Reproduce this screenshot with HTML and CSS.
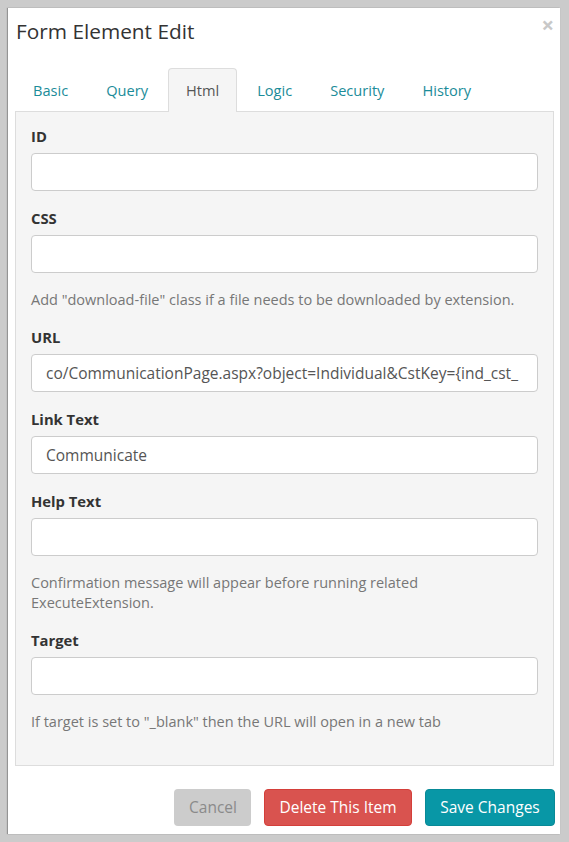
FILE: index.html
```html
<!DOCTYPE html>
<html>
<head>
<meta charset="utf-8">
<link rel="stylesheet" href="styles.css">
</head>
<body>
<div class="modal">
  <div class="modal-header">
    <h4 class="modal-title">Form Element Edit</h4>
    <span class="close">&times;</span>
  </div>
  <div class="modal-body">
    <ul class="tabs">
      <li class="tab">Basic</li>
      <li class="tab">Query</li>
      <li class="tab active">Html</li>
      <li class="tab">Logic</li>
      <li class="tab">Security</li>
      <li class="tab">History</li>
    </ul>
    <div class="panel">
      <div class="group">
        <label class="lbl">ID</label>
        <input class="field" type="text" value="">
      </div>
      <div class="group">
        <label class="lbl">CSS</label>
        <input class="field" type="text" value="">
        <p class="help">Add "download-file" class if a file needs to be downloaded by extension.</p>
      </div>
      <div class="group">
        <label class="lbl">URL</label>
        <div class="field">co/CommunicationPage.aspx?object=Individual&amp;CstKey={ind_cst_</div>
      </div>
      <div class="group">
        <label class="lbl">Link Text</label>
        <div class="field">Communicate</div>
      </div>
      <div class="group">
        <label class="lbl">Help Text</label>
        <input class="field" type="text" value="">
        <p class="help">Confirmation message will appear before running related<br>ExecuteExtension.</p>
      </div>
      <div class="group">
        <label class="lbl">Target</label>
        <input class="field" type="text" value="">
        <p class="help">If target is set to "_blank" then the URL will open in a new tab</p>
      </div>
    </div>
  </div>
  <div class="modal-footer">
    <button class="btn btn-cancel">Cancel</button>
    <button class="btn btn-delete">Delete This Item</button>
    <button class="btn btn-save">Save Changes</button>
  </div>
</div>
</body>
</html>
```

FILE: styles.css
```css
* { box-sizing: border-box; }
html, body { margin: 0; padding: 0; }
body {
  background: #cbcbcb;
  padding: 8px 9px 8px 8px;
  font-family: "Open Sans", "Noto Sans", sans-serif;
  color: #333;
}
.modal {
  width: 552px;
  height: 826px;
  background: #fff;
  box-shadow: -1px 0 1px rgba(0,0,0,0.25), 0 0 1px rgba(0,0,0,0.15);
  display: flex;
  flex-direction: column;
}
.modal-header {
  position: relative;
  padding: 8px 8px 0 8px;
  height: 60px;
}
.modal-title {
  margin: 0;
  font-size: 20.8px;
  font-weight: 400;
  line-height: 30px;
  color: #333;
}
.close {
  position: absolute;
  right: 6px;
  top: 3px;
  font-size: 22px;
  font-weight: 700;
  color: #c8c8c8;
  line-height: 26px;
}
.modal-body {
  padding: 0 6px 0 7px;
}
.tabs {
  list-style: none;
  margin: 0;
  padding: 0;
  display: flex;
  gap: 2px;
  height: 43px;
}
.tab {
  padding: 11px 17px 0 17px;
  height: 43px;
  font-size: 14.6px;
  line-height: 20px;
  color: #1b8c99;
  border: 1px solid transparent;
  border-bottom: none;
  border-radius: 4px 4px 0 0;
}
.tab.active {
  background: #f5f5f5;
  border-color: #ddd;
  color: #555;
  height: 44px;
  position: relative;
  z-index: 1;
}
.panel {
  background: #f5f5f5;
  border: 1px solid #ddd;
  padding: 15px 15px 15px 15px;
  height: 655px;
}
.group {
  margin-bottom: 18px;
}
.lbl {
  display: block;
  font-size: 14.8px;
  font-weight: 700;
  line-height: 19px;
  color: #333;
  margin-bottom: 7px;
}
.field {
  display: block;
  width: 100%;
  height: 38px;
  border: 1px solid #ccc;
  border-radius: 4px;
  background: #fff;
  padding: 0 14px;
  font-family: "Open Sans", "Noto Sans", sans-serif;
  font-size: 15.5px;
  line-height: 36px;
  color: #555;
  white-space: nowrap;
  overflow: hidden;
  margin: 0;
}
.help {
  margin: 17px 0 0 0;
  font-size: 14.5px;
  line-height: 20px;
  color: #777;
}
.modal-footer {
  display: flex;
  justify-content: flex-end;
  gap: 13px;
  padding: 23px 5px 0 0;
}
.btn {
  font-family: "Open Sans", "Noto Sans", sans-serif;
  font-size: 15.5px;
  height: 37px;
  border: 1px solid transparent;
  border-radius: 4px;
  padding: 0 14px;
  color: #fff;
  line-height: 35px;
}
.btn-cancel {
  background: #cccccc;
  color: #8a8a8a;
  width: 77px;
}
.btn-delete {
  background: #d9534f;
  border-color: #d43f3a;
  width: 148px;
}
.btn-save {
  background: #0897a6;
  border-color: #088a97;
  width: 130px;
}
```
